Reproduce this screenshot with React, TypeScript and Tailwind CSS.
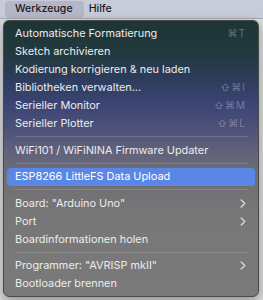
import React from "react";

type Item =
  | { kind: "item"; label: string; shortcut?: string; sub?: boolean; active?: boolean }
  | { kind: "sep" };

const items: Item[] = [
  { kind: "item", label: "Automatische Formatierung", shortcut: "⌘T" },
  { kind: "item", label: "Sketch archivieren" },
  { kind: "item", label: "Kodierung korrigieren & neu laden" },
  { kind: "item", label: "Bibliotheken verwalten...", shortcut: "⇧⌘I" },
  { kind: "item", label: "Serieller Monitor", shortcut: "⇧⌘M" },
  { kind: "item", label: "Serieller Plotter", shortcut: "⇧⌘L" },
  { kind: "sep" },
  { kind: "item", label: "WiFi101 / WiFiNINA Firmware Updater" },
  { kind: "sep" },
  { kind: "item", label: "ESP8266 LittleFS Data Upload", active: true },
  { kind: "sep" },
  { kind: "item", label: 'Board: "Arduino Uno"', sub: true },
  { kind: "item", label: "Port", sub: true },
  { kind: "item", label: "Boardinformationen holen" },
  { kind: "sep" },
  { kind: "item", label: 'Programmer: "AVRISP mkII"', sub: true },
  { kind: "item", label: "Bootloader brennen" },
];

function Chevron() {
  return (
    <svg width="6" height="9" viewBox="0 0 6 9" fill="none">
      <path d="M1.2 1 L4.8 4.5 L1.2 8" stroke="#d8d8d8" strokeWidth="1.4" strokeLinecap="round" strokeLinejoin="round" />
    </svg>
  );
}

export default function App() {
  return (
    <div
      className="relative w-[263px] h-[300px] overflow-hidden bg-[#dcdcdc]"
      style={{ fontFamily: "Inter, 'DejaVu Sans', sans-serif" }}
    >
      {/* menu bar */}
      <div className="h-[19px] bg-[#c8cbda] flex items-center gap-[5px] pl-[5px] border-b border-[#a9acb8] text-[10.6px] font-medium text-[#1c1c1e]">
        <div className="h-[17px] rounded-[4px] bg-[#b3b7c7] flex items-center pl-[10px] pr-[11px] whitespace-nowrap">
          <span>Werkzeuge</span>
        </div>
        <div className="whitespace-nowrap">
          <span>Hilfe</span>
        </div>
      </div>

      {/* dropdown menu */}
      <div className="absolute left-[3px] top-[20px] w-[256px] rounded-[6px] border border-[#4a4a4a] px-[3px] pt-[3.5px] pb-[3.5px] shadow-[0_4px_12px_rgba(0,0,0,0.35)] bg-[linear-gradient(to_bottom,#1e3536_0%,#22393f_12%,#2f3d5e_22%,#3b4473_30%,#4a5078_38%,#62637b_48%,#707075_58%,#777777_72%,#7a7a7a_100%)]">
        {items.map((it, i) =>
          it.kind === "sep" ? (
            <div key={i} className="h-[8.5px] flex items-center pl-[8px] pr-[7px]">
              <div className="h-px w-full bg-[rgba(255,255,255,0.16)]" />
            </div>
          ) : (
            <div
              key={i}
              className={
                "h-[18px] flex items-center pl-[8px] pr-[9px] rounded-[4px] text-[10.9px] " +
                (it.active ? "bg-[#5a87e6] text-white" : "text-[#ececec]")
              }
            >
              <span className="flex-1 whitespace-nowrap">{it.label}</span>
              {it.shortcut && (
                <span className="text-[10px] text-[rgba(255,255,255,0.3)] tracking-[1px]">{it.shortcut}</span>
              )}
              {it.sub && <Chevron />}
            </div>
          )
        )}
      </div>
    </div>
  );
}
